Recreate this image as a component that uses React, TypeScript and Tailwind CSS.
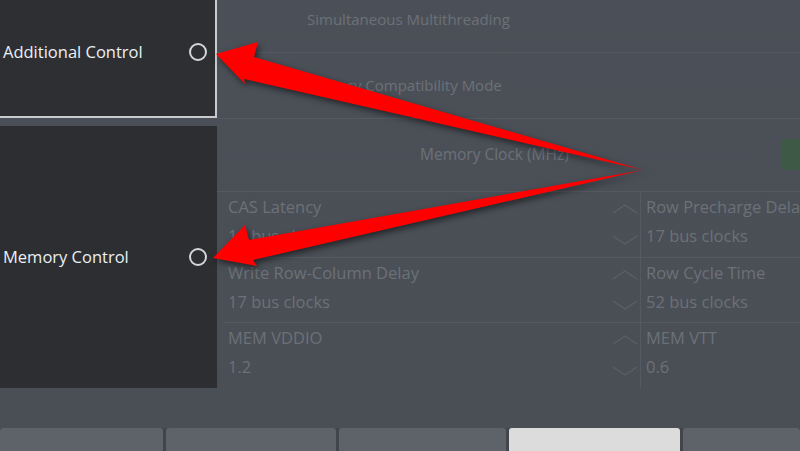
import React from 'react';

type Cell = { label: string; value: string };

const cells: Cell[][] = [
  [
    { label: 'CAS Latency', value: '16 bus clocks' },
    { label: 'Row Precharge Delay', value: '17 bus clocks' },
  ],
  [
    { label: 'Write Row-Column Delay', value: '17 bus clocks' },
    { label: 'Row Cycle Time', value: '52 bus clocks' },
  ],
  [
    { label: 'MEM VDDIO', value: '1.2' },
    { label: 'MEM VTT', value: '0.6' },
  ],
];

const tabs = [
  { name: 'Current', w: 'w-[163px]' },
  { name: 'Creator Mode', w: 'w-[170px]' },
  { name: 'Game Mode', w: 'w-[167px]' },
  { name: 'Profile 1', w: 'w-[171px]', active: true },
  { name: 'Profile 2', w: 'flex-1' },
];

const Chevrons = () => (
  <div className="flex w-[32px] shrink-0 flex-col items-center justify-between py-[12px] border-r border-[#555a61]">
    <svg width="26" height="10" viewBox="0 0 26 10" fill="none" stroke="#5b6067" strokeWidth="1.3">
      <path d="M1 9 L13 1 L25 9" />
    </svg>
    <svg width="26" height="10" viewBox="0 0 26 10" fill="none" stroke="#5b6067" strokeWidth="1.3">
      <path d="M1 1 L13 9 L25 1" />
    </svg>
  </div>
);

const Radio = () => (
  <span className="block h-[18px] w-[18px] shrink-0 rounded-full border-2 border-[#d6d6d6]" />
);

// the two red callout arrows pasted over the screenshot
const Arrows = () => (
  <svg
    className="pointer-events-none absolute left-0 top-0"
    width="800"
    height="451"
    viewBox="0 0 800 451"
    style={{ filter: 'drop-shadow(2px 3px 3px rgba(0,0,0,0.55))' }}
  >
    <polygon
      fill="#ff0000"
      points="216,54 258,42 254,57 643,170 244,79 245,84"
    />
    <polygon
      fill="#ff0000"
      points="213,258 245,225 249,240 643,170 253,260 257,266"
    />
  </svg>
);

export default function App() {
  return (
    <div
      className="relative h-[451px] w-[800px] overflow-hidden bg-gradient-to-b from-[#4b5058] to-[#4a4e55] text-[15px]"
      style={{ fontFamily: '"Open Sans", "Noto Sans", sans-serif' }}
    >
      <div className="flex h-[388px]">
        {/* left column */}
        <div className="flex w-[217px] shrink-0 flex-col">
          <div className="flex h-[118px] items-center justify-between border-b-2 border-r-2 border-[#c9cbcd] bg-[#2d2f33] pb-[12px] pl-[3px] pr-[8px]">
            <span className="text-[16.5px] text-[#eaf0f6]">Additional Control</span>
            <Radio />
          </div>
          <div className="mt-[8px] flex flex-1 items-center justify-between bg-[#2c2e32] pl-[3px] pr-[10px]">
            <span className="text-[16.5px] text-[#eaf0f6]">Memory Control</span>
            <Radio />
          </div>
        </div>

        {/* right column */}
        <div className="flex min-w-0 flex-1 flex-col overflow-hidden text-[#6c7178]">
          <div className="flex h-[53px] items-center border-b border-[#555a61] pb-[14px] pl-[90px]">
            Simultaneous Multithreading
          </div>
          <div className="flex h-[66px] items-center border-b border-[#555a61] pl-[97px]">
            Legacy Compatibility Mode
          </div>
          <div className="flex h-[73px] items-center justify-between border-b border-[#555a61] pl-[203px]">
            <span className="text-[15.5px]">Memory Clock (MHz)</span>
            <span className="mb-[2px] h-[31px] w-[18px] bg-[#3e5a47]" />
          </div>
          <div className="flex flex-1 flex-col pl-[6px] text-[16.5px]">
            {cells.map((row, i) => (
              <div
                key={i}
                className={`flex flex-1 ${i < cells.length - 1 ? 'border-b border-[#555a61]' : ''}`}
              >
                {row.map((c, j) => (
                  <div key={c.label} className={`flex ${j === 0 ? 'w-[418px] shrink-0' : 'min-w-0 flex-1'}`}>
                    <div className="flex min-w-0 flex-1 flex-col justify-center gap-[9px] pl-[5px] pb-[6px]">
                      <span className="whitespace-nowrap leading-[20px]">{c.label}</span>
                      <span className="whitespace-nowrap leading-[20px]">{c.value}</span>
                    </div>
                    {j === 0 && <Chevrons />}
                  </div>
                ))}
              </div>
            ))}
          </div>
        </div>
      </div>

      {/* bottom tabs */}
      <div className="mt-[40px] flex gap-[3px] bg-[#42464c]">
        {tabs.map((t) => (
          <div
            key={t.name}
            className={`${t.w} h-[40px] rounded-t-[3px] pt-[18px] text-center text-[15px] ${
              t.active ? 'bg-[#dcdcdc] text-[#222]' : 'bg-[#5e6269] text-[#f2f2f2]'
            }`}
          >
            {t.name}
          </div>
        ))}
      </div>

      <Arrows />
    </div>
  );
}
